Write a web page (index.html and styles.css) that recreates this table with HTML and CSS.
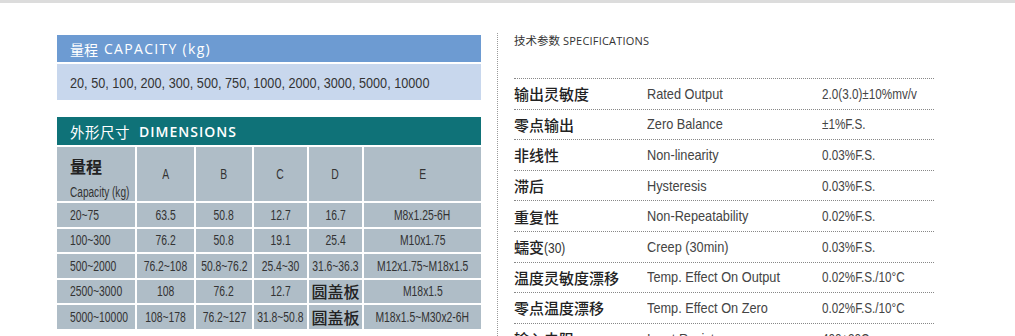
FILE: index.html
```html
<!DOCTYPE html>
<html lang="zh">
<head>
<meta charset="utf-8">
<title>Specifications</title>
<link rel="stylesheet" href="styles.css">
</head>
<body>
<div class="topbar"></div>
<div class="page">
  <div class="left">
    <div class="cap-head"><span class="zh">量程</span> <span class="en">CAPACITY (kg)</span></div>
    <div class="cap-body"><span class="n n-cap">20, 50, 100, 200, 300, 500, 750, 1000, 2000, 3000, 5000, 10000</span></div>

    <div class="dim-head"><span class="zh">外形尺寸</span> <span class="en">DIMENSIONS</span></div>
    <div class="dim-table">
      <div class="cell first head-first"><span class="hz">量程</span><span class="n n-hen">Capacity (kg)</span></div>
      <div class="cell"><span class="n n-c">A</span></div>
      <div class="cell"><span class="n n-c">B</span></div>
      <div class="cell"><span class="n n-c">C</span></div>
      <div class="cell"><span class="n n-c">D</span></div>
      <div class="cell"><span class="n n-c">E</span></div>

      <div class="cell first"><span class="n n-l">20~75</span></div>
      <div class="cell"><span class="n n-c">63.5</span></div>
      <div class="cell"><span class="n n-c">50.8</span></div>
      <div class="cell"><span class="n n-c">12.7</span></div>
      <div class="cell"><span class="n n-c">16.7</span></div>
      <div class="cell"><span class="n n-c">M8x1.25-6H</span></div>

      <div class="cell first"><span class="n n-l">100~300</span></div>
      <div class="cell"><span class="n n-c">76.2</span></div>
      <div class="cell"><span class="n n-c">50.8</span></div>
      <div class="cell"><span class="n n-c">19.1</span></div>
      <div class="cell"><span class="n n-c">25.4</span></div>
      <div class="cell"><span class="n n-c">M10x1.75</span></div>

      <div class="cell first"><span class="n n-l">500~2000</span></div>
      <div class="cell"><span class="n n-c">76.2~108</span></div>
      <div class="cell"><span class="n n-c">50.8~76.2</span></div>
      <div class="cell"><span class="n n-c">25.4~30</span></div>
      <div class="cell"><span class="n n-c">31.6~36.3</span></div>
      <div class="cell"><span class="n n-c">M12x1.75~M18x1.5</span></div>

      <div class="cell first"><span class="n n-l">2500~3000</span></div>
      <div class="cell"><span class="n n-c">108</span></div>
      <div class="cell"><span class="n n-c">76.2</span></div>
      <div class="cell"><span class="n n-c">12.7</span></div>
      <div class="cell zhcell">圆盖板</div>
      <div class="cell"><span class="n n-c">M18x1.5</span></div>

      <div class="cell first"><span class="n n-l">5000~10000</span></div>
      <div class="cell"><span class="n n-c">108~178</span></div>
      <div class="cell"><span class="n n-c">76.2~127</span></div>
      <div class="cell"><span class="n n-c">31.8~50.8</span></div>
      <div class="cell zhcell">圆盖板</div>
      <div class="cell"><span class="n n-c">M18x1.5~M30x2-6H</span></div>
    </div>
  </div>

  <div class="right">
    <div class="spec-title"><span class="zh">技术参数</span> SPECIFICATIONS</div>
    <div class="spec-list">
      <div class="spec-row"><span class="s-zh">输出灵敏度</span><span class="s-en"><span class="n n-en">Rated Output</span></span><span class="s-val"><span class="n n-val">2.0(3.0)±10%mv/v</span></span></div>
      <div class="spec-row"><span class="s-zh">零点输出</span><span class="s-en"><span class="n n-en">Zero Balance</span></span><span class="s-val"><span class="n n-val">±1%F.S.</span></span></div>
      <div class="spec-row"><span class="s-zh">非线性</span><span class="s-en"><span class="n n-en">Non-linearity</span></span><span class="s-val"><span class="n n-val">0.03%F.S.</span></span></div>
      <div class="spec-row"><span class="s-zh">滞后</span><span class="s-en"><span class="n n-en">Hysteresis</span></span><span class="s-val"><span class="n n-val">0.03%F.S.</span></span></div>
      <div class="spec-row"><span class="s-zh">重复性</span><span class="s-en"><span class="n n-en">Non-Repeatability</span></span><span class="s-val"><span class="n n-val">0.02%F.S.</span></span></div>
      <div class="spec-row"><span class="s-zh">蠕变<span class="n n-num">(30)</span></span><span class="s-en"><span class="n n-en">Creep (30min)</span></span><span class="s-val"><span class="n n-val">0.03%F.S.</span></span></div>
      <div class="spec-row"><span class="s-zh">温度灵敏度漂移</span><span class="s-en"><span class="n n-en">Temp. Effect On Output</span></span><span class="s-val"><span class="n n-val">0.02%F.S./10°C</span></span></div>
      <div class="spec-row"><span class="s-zh">零点温度漂移</span><span class="s-en"><span class="n n-en">Temp. Effect On Zero</span></span><span class="s-val"><span class="n n-val">0.02%F.S./10°C</span></span></div>
      <div class="spec-row"><span class="s-zh">输入电阻</span><span class="s-en"><span class="n n-en">Input Resistance</span></span><span class="s-val"><span class="n n-val">400±20Ω</span></span></div>
    </div>
  </div>
</div>
</body>
</html>
```

FILE: styles.css
```css
html, body {
  margin: 0;
  padding: 0;
  background: #ffffff;
}

body {
  width: 1015px;
  height: 336px;
  overflow: hidden;
  font-family: "Liberation Sans", "Noto Sans CJK SC", sans-serif;
  color: #333;
}

.topbar {
  height: 3px;
  background: #dcdcdc;
}

.page {
  display: flex;
  padding-left: 57px;
}

.left {
  width: 424px;
  padding-top: 32px;
  flex: none;
}

.zh {
  font-family: "Noto Sans CJK SC", sans-serif;
}

/* narrow (condensed) text */
.n {
  display: inline-block;
  white-space: nowrap;
  transform-origin: left center;
  font-family: "Liberation Sans", sans-serif;
}

.n-cap {
  font-size: 15px;
  transform: scaleX(0.845);
}

.n-hen {
  font-size: 14px;
  transform: scaleX(0.72);
}

.n-l {
  font-size: 14px;
  transform: scaleX(0.74);
}

.n-c {
  font-size: 14px;
  transform: scaleX(0.74);
  transform-origin: center center;
}

.n-en {
  font-size: 15px;
  transform: scaleX(0.85);
}

.n-val {
  font-size: 15px;
  transform: scaleX(0.78);
}

.n-num {
  font-size: 15px;
  font-weight: 400;
  color: #333;
  transform: scaleX(0.8);
  margin-right: -6px;
}

.cap-head {
  height: 27px;
  background: #6d9bd2;
  color: #fff;
  display: flex;
  align-items: center;
  padding-left: 13px;
  font-size: 14px;
  gap: 6px;
}

.cap-head .en {
  font-family: "Open Sans", sans-serif;
  font-size: 14px;
  letter-spacing: 1.3px;
}

.cap-body {
  margin-top: 2px;
  height: 36px;
  background: #c8d7ed;
  display: flex;
  align-items: center;
  padding-left: 13px;
  color: #333;
  overflow: hidden;
}

.dim-head {
  margin-top: 17px;
  height: 28px;
  background: #0f7278;
  color: #fff;
  display: flex;
  align-items: center;
  padding-left: 13px;
  font-size: 14px;
  gap: 9px;
}

.dim-head .zh {
  font-size: 14.5px;
  letter-spacing: 0.5px;
}

.dim-head .en {
  font-family: "Open Sans", sans-serif;
  font-weight: 600;
  font-size: 14px;
  letter-spacing: 1px;
}

.dim-table {
  margin-top: 2px;
  display: grid;
  grid-template-columns: 78px 57px 56px 53px 53px 117px;
  grid-template-rows: 54px repeat(5, 23.5px);
  gap: 2px;
}

.cell {
  background: #afbdc7;
  display: flex;
  align-items: center;
  justify-content: center;
  color: #333;
  white-space: nowrap;
  min-width: 0;
}

.cell.first {
  justify-content: flex-start;
  padding-left: 13px;
}

.head-first {
  flex-direction: column;
  align-items: flex-start;
  justify-content: flex-start !important;
  padding-top: 9px;
  gap: 8px;
}

.hz {
  font-family: "Noto Sans CJK SC", sans-serif;
  font-weight: 700;
  font-size: 16px;
  line-height: 20px;
  color: #222;
}

.n-hen {
  line-height: 16px;
}

.zhcell {
  font-family: "Noto Sans CJK SC", sans-serif;
  font-size: 16px;
  font-weight: 500;
  color: #222;
}

.right {
  margin-left: 16px;
  margin-top: 30px;
  border-left: 1px dotted #9a9a9a;
  padding-left: 16px;
  width: 420px;
  flex: none;
}

.spec-title {
  font-family: "Open Sans", "Noto Sans CJK SC", sans-serif;
  font-size: 11px;
  line-height: 15px;
  color: #333;
  letter-spacing: 0.2px;
}

.spec-title .zh {
  font-size: 11.5px;
  letter-spacing: 0;
}

.spec-list {
  margin-top: 30px;
  border-top: 1px dotted #888;
}

.spec-row {
  display: grid;
  grid-template-columns: 133px 175px 1fr;
  align-items: center;
  height: 29.6px;
  border-bottom: 1px dotted #888;
}

.s-zh {
  font-family: "Noto Sans CJK SC", sans-serif;
  font-size: 15px;
  font-weight: 500;
  color: #222;
  white-space: nowrap;
}

.s-en,
.s-val {
  color: #444;
  white-space: nowrap;
}
```
